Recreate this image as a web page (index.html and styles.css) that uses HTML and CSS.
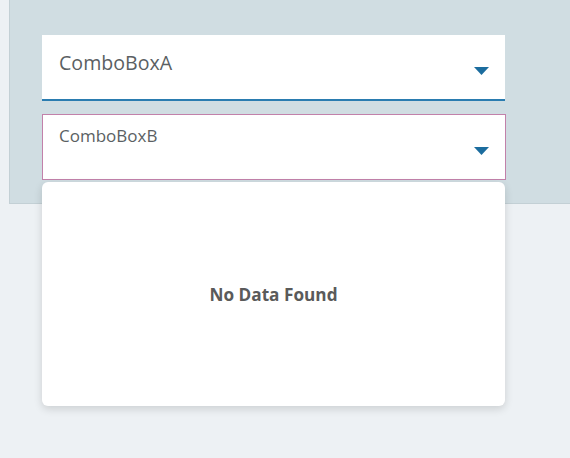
FILE: index.html
```html
<!DOCTYPE html>
<html lang="en">
<head>
<meta charset="utf-8">
<title>ComboBox</title>
<link rel="stylesheet" href="styles.css">
</head>
<body>
<div class="panel">
  <div class="combo combo-a">
    <span class="label label-a">ComboBoxA</span>
    <svg class="arrow" width="15" height="8" viewBox="0 0 15 8"><path d="M0 0 H15 L7.5 8 Z" fill="#1b6c9e"/></svg>
  </div>
  <div class="combo-wrap">
    <div class="combo combo-b">
      <span class="label label-b">ComboBoxB</span>
      <svg class="arrow" width="15" height="8" viewBox="0 0 15 8"><path d="M0 0 H15 L7.5 8 Z" fill="#1b6c9e"/></svg>
    </div>
    <div class="dropdown">
      <span class="empty">No Data Found</span>
    </div>
  </div>
</div>
</body>
</html>
```

FILE: styles.css
```css
html, body {
  margin: 0;
  padding: 0;
}
body {
  background: #edf1f4;
  width: 570px;
  height: 458px;
  overflow: hidden;
  font-family: "Open Sans", "DejaVu Sans", sans-serif;
}
.panel {
  margin-left: 9px;
  height: 204px;
  background: #d0dde2;
  border-left: 1px solid #c3d0d5;
  border-bottom: 1px solid #c3d0d5;
  padding: 35px 0 0 32px;
  box-sizing: border-box;
}
.combo {
  display: flex;
  justify-content: space-between;
  background: #fff;
  box-sizing: border-box;
  height: 66px;
}
.combo-a {
  width: 463px;
  border-bottom: 2px solid #2a7cb0;
  padding: 14px 16px 0 17px;
}
.combo-wrap {
  position: relative;
  margin-top: 13px;
  width: 464px;
}
.combo-b {
  width: 464px;
  border: 1px solid #c281aa;
  padding: 9px 16px 0 16px;
}
.label {
  color: #5b5f63;
  align-self: flex-start;
}
.label-a {
  font-size: 19.6px;
}
.label-b {
  font-size: 17px;
}
.arrow {
  align-self: center;
  margin-top: -6px;
  flex: none;
}
.combo-b .arrow {
  margin-top: -2px;
}
.dropdown {
  position: absolute;
  left: 0;
  top: 68px;
  width: 463px;
  height: 224px;
  background: #fff;
  border-radius: 6px;
  box-shadow: 0 3px 9px rgba(0, 0, 0, 0.14);
  display: flex;
  align-items: center;
  justify-content: center;
}
.empty {
  font-weight: 700;
  font-size: 17.2px;
  color: #5a5a5a;
}
```
